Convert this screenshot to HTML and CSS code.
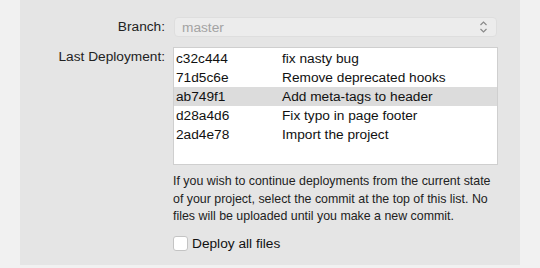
FILE: index.html
```html
<!DOCTYPE html>
<html>
<head>
<meta charset="utf-8">
<link rel="stylesheet" href="styles.css">
</head>
<body>
<div class="panel">
  <div class="form">
    <div class="label label-branch">Branch:</div>
    <div class="select">
      <span class="select-value">master</span>
      <svg class="chevrons" width="9" height="14" viewBox="0 0 9 14">
        <path d="M1.5 5 L4.5 2 L7.5 5" fill="none" stroke="#8a8a8a" stroke-width="1.2"/>
        <path d="M1.5 9 L4.5 12 L7.5 9" fill="none" stroke="#8a8a8a" stroke-width="1.2"/>
      </svg>
    </div>
    <div class="label label-list">Last Deployment:</div>
    <div class="list">
      <div class="row"><span class="hash">c32c444</span><span class="msg">fix nasty bug</span></div>
      <div class="row"><span class="hash">71d5c6e</span><span class="msg">Remove deprecated hooks</span></div>
      <div class="row selected"><span class="hash">ab749f1</span><span class="msg">Add meta-tags to header</span></div>
      <div class="row"><span class="hash">d28a4d6</span><span class="msg">Fix typo in page footer</span></div>
      <div class="row"><span class="hash">2ad4e78</span><span class="msg">Import the project</span></div>
    </div>
    <div></div>
    <p class="help">If you wish to continue deployments from the current state of your project, select the commit at the top of this list. No files will be uploaded until you make a new commit.</p>
    <div></div>
    <label class="check"><span class="box"></span><span>Deploy all files</span></label>
  </div>
</div>
</body>
</html>
```

FILE: styles.css
```css
html, body {
  margin: 0;
  padding: 0;
}
body {
  background: #f1f1f1;
  font-family: "Helvetica Neue", "Liberation Sans", Arial, sans-serif;
  color: #1a1a1a;
  width: 540px;
  height: 268px;
  overflow: hidden;
}
.panel {
  margin-left: 20px;
  width: 500px;
  height: 265px;
  background: #e5e5e5;
  box-sizing: border-box;
  padding-top: 17px;
}
.form {
  display: grid;
  grid-template-columns: 145px 325px;
  column-gap: 8px;
  align-items: start;
}
.label {
  text-align: right;
  font-size: 13.7px;
  color: #222;
}
.label-branch {
  line-height: 20px;
}
.label-list {
  margin-top: 10px;
  line-height: 20px;
}
.select {
  height: 20px;
  box-sizing: border-box;
  border-radius: 4px;
  background: #ececec;
  border: 1px solid #dedede;
  display: flex;
  align-items: center;
  justify-content: space-between;
  padding: 0 8px 0 7px;
  margin-left: 1px;
  width: 323px;
}
.select-value {
  font-size: 13.7px;
  color: #a3a3a3;
}
.chevrons {
  display: block;
}
.list {
  margin-top: 10px;
  height: 118px;
  box-sizing: border-box;
  background: #ffffff;
  border: 1px solid #cfcfcf;
  padding-top: 1px;
}
.row {
  height: 19px;
  line-height: 19px;
  font-size: 13.7px;
  display: flex;
  color: #111;
}
.row.selected {
  background: #dcdcdc;
}
.hash {
  width: 106px;
  padding-left: 2px;
}
.msg {
  flex: 1;
}
.help {
  margin: 8px 0 0 0;
  font-size: 12.4px;
  line-height: 17.5px;
  color: #222;
  width: 318px;
}
.check {
  margin-top: 10px;
  display: flex;
  align-items: center;
  font-size: 13.7px;
  color: #111;
}
.box {
  width: 15px;
  height: 15px;
  box-sizing: border-box;
  background: #fff;
  border: 1px solid #c4c4c4;
  border-radius: 3px;
  margin-right: 4px;
}
```
